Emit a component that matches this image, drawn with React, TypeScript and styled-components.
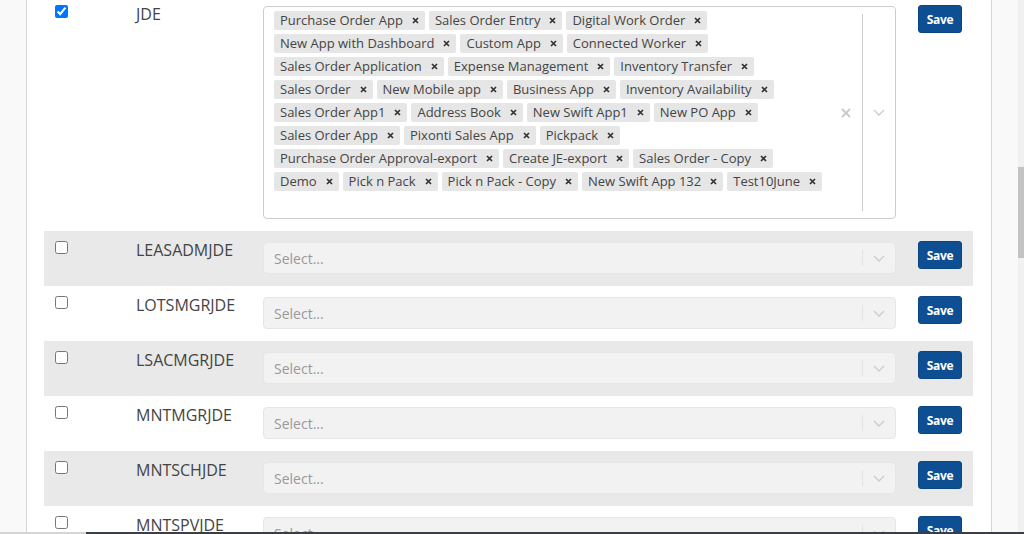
import React from 'react';
import styled, { createGlobalStyle } from 'styled-components';

const GlobalStyle = createGlobalStyle`
    html, body {
        margin: 0;
        padding: 0;
        overflow: hidden;
        background: #f9f9f9;
    }
    body {
        font-family: "Open Sans", "Liberation Sans", sans-serif;
    }
`;

const Screen = styled('div')`
    width: 1024px;
    height: 534px;
    display: grid;
    grid-template-rows: 1fr 2px;
    overflow: hidden;
`;

const Viewport = styled('div')`
    display: flex;
    min-height: 0;
`;

const Page = styled('div')`
    flex: 1;
    padding: 0 26px 0 26px;
    background: #f9f9f9;
    overflow: hidden;
`;

const Card = styled('div')`
    height: 100%;
    background: #fff;
    border-left: 1px solid #d6d6d6;
    border-right: 1px solid #d6d6d6;
    padding: 0 18px 0 17px;
    overflow: hidden;
`;

// content is scrolled by a few pixels in the shot
const RoleList = styled('div')`
    margin-top: -5px;
`;

const Row = styled('div')<{ $shaded: boolean }>`
    display: grid;
    grid-template-columns: 81px 127px 633px 1fr;
    align-items: start;
    padding: 10px 11px 12px;
    background: ${({ $shaded }) => ($shaded ? '#e9e9e9' : '#fff')};
`;

const Check = styled('input')`
    width: 13px;
    height: 13px;
    margin: 0;
`;

const RoleName = styled('span')`
    font-size: 16px;
    line-height: 16px;
    color: #444;
    padding-top: 1px;
`;

const Control = styled('div')<{ $disabled?: boolean }>`
    margin-top: 1px;
    display: flex;
    min-height: 32px;
    box-sizing: border-box;
    border: 1px solid ${({ $disabled }) => ($disabled ? '#e6e6e6' : '#ccc')};
    border-radius: 4px;
    background: ${({ $disabled }) => ($disabled ? '#f2f2f2' : '#fff')};
`;

const ValueContainer = styled('div')`
    flex: 1;
    display: flex;
    flex-direction: column;
    justify-content: center;
    padding: 2px 8px;
    min-width: 0;
`;

const TagLine = styled('div')`
    display: flex;
    white-space: nowrap;
`;

const Tag = styled('div')`
    display: flex;
    align-items: center;
    margin: 2px;
    border-radius: 2px;
    background: #e6e6e6;
    height: 19px;
`;

const TagLabel = styled('span')`
    font-size: 13px;
    line-height: 13px;
    color: #444;
    padding: 3px 3px 3px 6px;
`;

const TagRemove = styled('span')`
    width: 19px;
    height: 19px;
    display: flex;
    align-items: center;
    justify-content: center;
`;

const InputLine = styled('div')`
    height: 19px;
    margin: 2px;
`;

const Placeholder = styled('span')`
    margin-left: 2px;
    font-size: 14px;
    color: #999;
`;

const Indicators = styled('div')`
    display: flex;
    align-items: center;
    align-self: stretch;
`;

const Indicator = styled('div')`
    width: 32px;
    display: flex;
    align-items: center;
    justify-content: center;
`;

const Separator = styled('span')<{ $disabled?: boolean }>`
    align-self: stretch;
    width: 1px;
    margin: 7px 0;
    background: ${({ $disabled }) => ($disabled ? '#e3e3e3' : '#ccc')};
`;

const SaveButton = styled('button')`
    justify-self: end;
    width: 44px;
    height: 28px;
    border: 1px solid #0b4683;
    border-radius: 3px;
    background: #0e4f94;
    color: #fff;
    font-family: "Open Sans", sans-serif;
    font-weight: 700;
    font-size: 12px;
    letter-spacing: -0.3px;
    padding: 0;
    cursor: pointer;
`;

const ScrollTrack = styled('div')`
    width: 6px;
    background: #f1f1f1;
    padding-top: 167px;
`;

const ScrollThumb = styled('div')`
    height: 91px;
    background: #c3c3c3;
`;

const BottomBar = styled('div')`
    display: grid;
    grid-template-columns: 86px 1fr;
`;

const BottomTrack = styled('div')`
    background: #d4d4d4;
`;

const BottomThumb = styled('div')`
    background: #3b3f44;
`;

function Chevron() {
    return (
        <svg width="12" height="7" viewBox="0 0 12 7">
            <polyline points="1,1 6,6 11,1" fill="none" stroke="#ccc" strokeWidth="1.4" />
        </svg>
    );
}

function ClearIcon() {
    return (
        <svg width="10" height="10" viewBox="0 0 10 10">
            <path d="M1 1 L9 9 M9 1 L1 9" stroke="#c8c8c8" strokeWidth="1.8" />
        </svg>
    );
}

function RemoveIcon() {
    return (
        <svg width="7" height="7" viewBox="0 0 7 7">
            <path d="M1 1 L6 6 M6 1 L1 6" stroke="#333" strokeWidth="1.7" />
        </svg>
    );
}

const jdeLines: string[][] = [
    ['Purchase Order App', 'Sales Order Entry', 'Digital Work Order'],
    ['New App with Dashboard', 'Custom App', 'Connected Worker'],
    ['Sales Order Application', 'Expense Management', 'Inventory Transfer'],
    ['Sales Order', 'New Mobile app', 'Business App', 'Inventory Availability'],
    ['Sales Order App1', 'Address Book', 'New Swift App1', 'New PO App'],
    ['Sales Order App', 'Pixonti Sales App', 'Pickpack'],
    ['Purchase Order Approval-export', 'Create JE-export', 'Sales Order - Copy'],
    ['Demo', 'Pick n Pack', 'Pick n Pack - Copy', 'New Swift App 132', 'Test10June'],
];

const otherRoles = ['LEASADMJDE', 'LOTSMGRJDE', 'LSACMGRJDE', 'MNTMGRJDE', 'MNTSCHJDE', 'MNTSPVJDE'];

function MultiSelect({ lines }: { lines: string[][] }) {
    return (
        <Control>
            <ValueContainer>
                {lines.map((line, i) => (
                    <TagLine key={i}>
                        {line.map((app) => (
                            <Tag key={app}>
                                <TagLabel>{app}</TagLabel>
                                <TagRemove><RemoveIcon /></TagRemove>
                            </Tag>
                        ))}
                    </TagLine>
                ))}
                <InputLine />
            </ValueContainer>
            <Indicators>
                <Indicator><ClearIcon /></Indicator>
                <Separator />
                <Indicator><Chevron /></Indicator>
            </Indicators>
        </Control>
    );
}

function EmptySelect() {
    return (
        <Control $disabled>
            <ValueContainer>
                <Placeholder>Select...</Placeholder>
            </ValueContainer>
            <Indicators>
                <Separator $disabled />
                <Indicator><Chevron /></Indicator>
            </Indicators>
        </Control>
    );
}

export default function App() {
    return (
        <>
            <GlobalStyle />
            <Screen>
                <Viewport>
                    <Page>
                        <Card>
                            <RoleList>
                                <Row $shaded={false}>
                                    <Check type="checkbox" defaultChecked />
                                    <RoleName>JDE</RoleName>
                                    <MultiSelect lines={jdeLines} />
                                    <SaveButton>Save</SaveButton>
                                </Row>
                                {otherRoles.map((role, i) => (
                                    <Row key={role} $shaded={i % 2 === 0}>
                                        <Check type="checkbox" />
                                        <RoleName>{role}</RoleName>
                                        <EmptySelect />
                                        <SaveButton>Save</SaveButton>
                                    </Row>
                                ))}
                            </RoleList>
                        </Card>
                    </Page>
                    <ScrollTrack><ScrollThumb /></ScrollTrack>
                </Viewport>
                <BottomBar>
                    <BottomTrack />
                    <BottomThumb />
                </BottomBar>
            </Screen>
        </>
    );
}
